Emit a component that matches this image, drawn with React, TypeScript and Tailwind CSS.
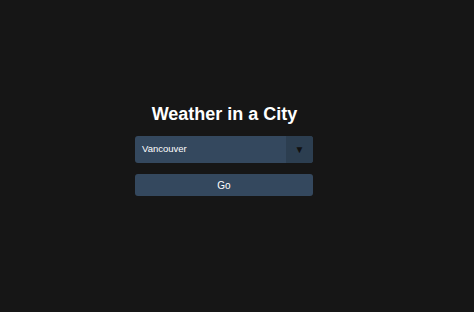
const App: React.FC = () => {
    return (
        <div className="w-[474px] h-[312px] bg-[#161616] pt-[101px] pl-[135px] font-['Liberation_Sans',Arial,sans-serif]">
            <div className="w-[178px] flex flex-col">
                <h1 className="text-[18px] leading-[26px] font-bold text-white text-center m-0 pl-[1px]">Weather in a City</h1>
                <div className="mt-[9px] flex flex-col gap-[11px]">
                    <div className="h-[27px] flex rounded-[3px] overflow-hidden bg-[#34485e]">
                        <div className="flex-1 flex items-center pl-[7px] text-[9.5px] text-white">Vancouver</div>
                        <div className="w-[27px] flex items-center justify-center bg-[#2c3e50] text-[10px] text-[#111]">▼</div>
                    </div>
                    <button className="h-[22px] rounded-[3px] bg-[#34485e] text-white text-[10px]">Go</button>
                </div>
            </div>
        </div>
    );
};

export default App;
